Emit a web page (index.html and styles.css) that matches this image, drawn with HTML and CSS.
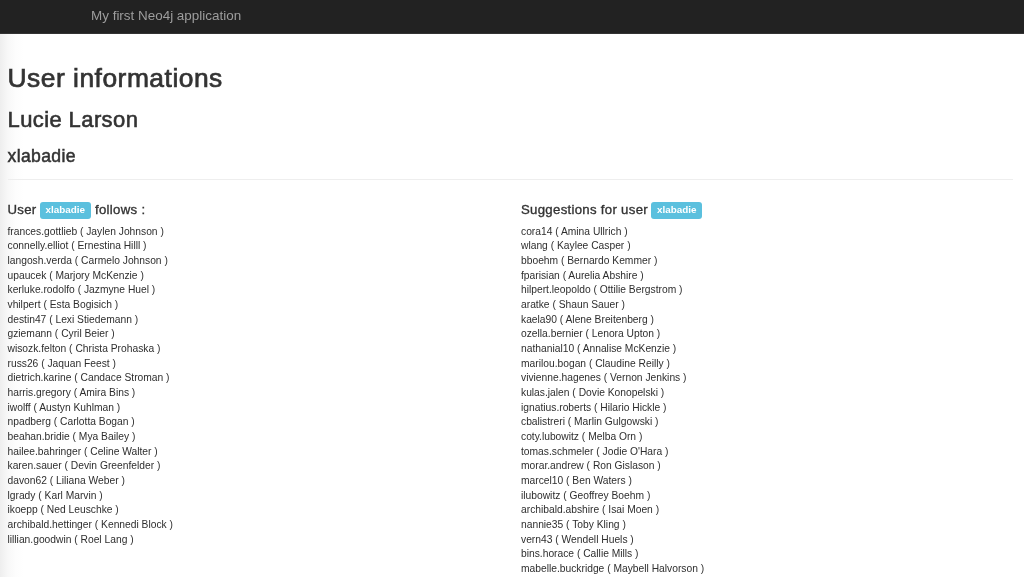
FILE: index.html
```html
<!DOCTYPE html>
<html lang="en">
<head>
<meta charset="utf-8">
<title>User informations</title>
<link rel="stylesheet" href="styles.css">
</head>
<body>
<nav class="navbar"><a class="brand">My first Neo4j application</a></nav>
<main class="container">
  <h1>User informations</h1>
  <h2>Lucie Larson</h2>
  <h3>xlabadie</h3>
  <hr>
  <div class="columns">
    <section class="column">
      <h4>User <span class="label">xlabadie</span> follows :</h4>
      <ul>
        <li>frances.gottlieb ( Jaylen Johnson )</li>
        <li>connelly.elliot ( Ernestina Hilll )</li>
        <li>langosh.verda ( Carmelo Johnson )</li>
        <li>upaucek ( Marjory McKenzie )</li>
        <li>kerluke.rodolfo ( Jazmyne Huel )</li>
        <li>vhilpert ( Esta Bogisich )</li>
        <li>destin47 ( Lexi Stiedemann )</li>
        <li>gziemann ( Cyril Beier )</li>
        <li>wisozk.felton ( Christa Prohaska )</li>
        <li>russ26 ( Jaquan Feest )</li>
        <li>dietrich.karine ( Candace Stroman )</li>
        <li>harris.gregory ( Amira Bins )</li>
        <li>iwolff ( Austyn Kuhlman )</li>
        <li>npadberg ( Carlotta Bogan )</li>
        <li>beahan.bridie ( Mya Bailey )</li>
        <li>hailee.bahringer ( Celine Walter )</li>
        <li>karen.sauer ( Devin Greenfelder )</li>
        <li>davon62 ( Liliana Weber )</li>
        <li>lgrady ( Karl Marvin )</li>
        <li>ikoepp ( Ned Leuschke )</li>
        <li>archibald.hettinger ( Kennedi Block )</li>
        <li>lillian.goodwin ( Roel Lang )</li>
      </ul>
    </section>
    <section class="column">
      <h4>Suggestions for user <span class="label">xlabadie</span></h4>
      <ul>
        <li>cora14 ( Amina Ullrich )</li>
        <li>wlang ( Kaylee Casper )</li>
        <li>bboehm ( Bernardo Kemmer )</li>
        <li>fparisian ( Aurelia Abshire )</li>
        <li>hilpert.leopoldo ( Ottilie Bergstrom )</li>
        <li>aratke ( Shaun Sauer )</li>
        <li>kaela90 ( Alene Breitenberg )</li>
        <li>ozella.bernier ( Lenora Upton )</li>
        <li>nathanial10 ( Annalise McKenzie )</li>
        <li>marilou.bogan ( Claudine Reilly )</li>
        <li>vivienne.hagenes ( Vernon Jenkins )</li>
        <li>kulas.jalen ( Dovie Konopelski )</li>
        <li>ignatius.roberts ( Hilario Hickle )</li>
        <li>cbalistreri ( Marlin Gulgowski )</li>
        <li>coty.lubowitz ( Melba Orn )</li>
        <li>tomas.schmeler ( Jodie O'Hara )</li>
        <li>morar.andrew ( Ron Gislason )</li>
        <li>marcel10 ( Ben Waters )</li>
        <li>ilubowitz ( Geoffrey Boehm )</li>
        <li>archibald.abshire ( Isai Moen )</li>
        <li>nannie35 ( Toby Kling )</li>
        <li>vern43 ( Wendell Huels )</li>
        <li>bins.horace ( Callie Mills )</li>
        <li>mabelle.buckridge ( Maybell Halvorson )</li>
      </ul>
    </section>
  </div>
</main>
</body>
</html>
```

FILE: styles.css
```css
* { box-sizing: border-box; }
html, body { margin: 0; height: 100%; }
body {
  overflow: hidden;
  background: linear-gradient(to right, #eeeeee 0, #f8f8f8 8px, #fdfdfd 16px, #fff 24px);
  color: #333;
  font-family: "Liberation Sans", Arial, sans-serif;
  font-size: 10.27px;
  line-height: 14.67px;
}
.navbar {
  height: 34px;
  padding-left: 91px;
  background: #222;
  border-bottom: 1px solid #333;
  display: flex;
  align-items: center;
}
.brand { color: #9d9d9d; font-size: 13.45px; filter: blur(0.3px); }
.container { padding: 0 11px 0 7.5px; filter: blur(0.25px); }
h1, h2, h3, h4 { margin: 0; font-weight: 400; color: #333; line-height: 1.1; }
h1 { margin-top: 30px; font-size: 26.4px; letter-spacing: 0.5px; -webkit-text-stroke: 0.7px #333; }
h2 { margin-top: 15px; font-size: 22px; letter-spacing: 0.4px; -webkit-text-stroke: 0.6px #333; }
h3 { margin-top: 15px; font-size: 17.6px; letter-spacing: 0.35px; -webkit-text-stroke: 0.5px #333; }
hr { margin: 12px 0 0; border: 0; border-top: 1px solid #eee; }
.columns { display: flex; margin-top: 22px; }
.column { flex: none; width: 513.5px; }
h4 { font-size: 13.2px; letter-spacing: 0.3px; -webkit-text-stroke: 0.35px #333; margin-bottom: 6px; }
.label {
  display: inline-block;
  margin-left: -1px;
  padding: 3.5px 6px;
  border-radius: 3px;
  background: #5bc0de;
  color: #fff;
  font-size: 9.9px;
  font-weight: 700;
  letter-spacing: 0;
  -webkit-text-stroke: 0;
  line-height: 10px;
  vertical-align: baseline;
}
ul { list-style: none; margin: 0; padding: 0; color: #2e2e2e; }
```
